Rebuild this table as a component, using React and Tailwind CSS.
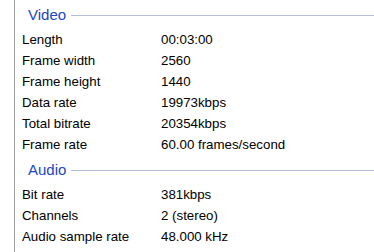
import React from "react";

const video = [
  ["Length", "00:03:00"],
  ["Frame width", "2560"],
  ["Frame height", "1440"],
  ["Data rate", "19973kbps"],
  ["Total bitrate", "20354kbps"],
  ["Frame rate", "60.00 frames/second"],
];

const audio = [
  ["Bit rate", "381kbps"],
  ["Channels", "2 (stereo)"],
  ["Audio sample rate", "48.000 kHz"],
];

// A titled group: heading with a rule running to the right, then label/value rows
function Section({ title, rows, className }) {
  return (
    <div className={className}>
      <div className="flex items-center h-[20px] pl-[13px]">
        <span className="text-[15px] leading-[20px] text-[#2346c2]">{title}</span>
        <div className="flex-1 h-px bg-[#b4bedc] ml-[5px]" />
      </div>
      <div className="mt-[4px]">
        {rows.map(([k, v]) => (
          <div key={k} className="flex h-[21px] items-center text-[13.3px] text-black pl-[7px]">
            <span className="w-[139px]">{k}</span>
            <span>{v}</span>
          </div>
        ))}
      </div>
    </div>
  );
}

export default function App() {
  return (
    <div
      className="w-[374px] h-[252px] bg-white flex overflow-hidden"
      style={{ fontFamily: '"Liberation Sans", Arial, sans-serif' }}
    >
      <div className="w-[14px]" />
      <div className="flex-1 border-l border-[#a0a0a0] pt-[5px]">
        <Section title="Video" rows={video} />
        <Section title="Audio" rows={audio} className="mt-[5px]" />
      </div>
    </div>
  );
}
